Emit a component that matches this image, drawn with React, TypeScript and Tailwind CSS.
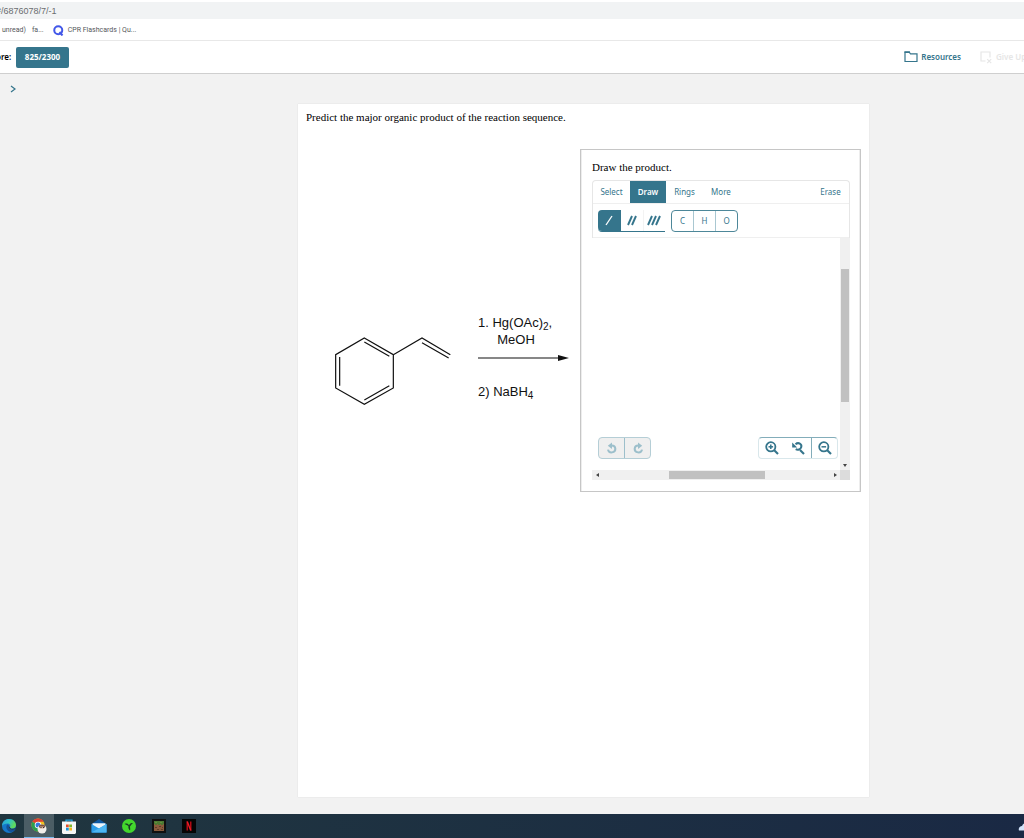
import type { ReactNode } from "react";

const teal = "#35758c";

function IconFolder() {
  return (
    <svg width="14" height="12" viewBox="0 0 14 12" fill="none" stroke={teal} strokeWidth="1.2">
      <path d="M1 10.5V1.2h4.2l1.3 1.6H13v7.700z" />
      <path d="M.5 1.2h5.500" strokeWidth="1.6" />
    </svg>
  );
}

function IconGiveUp() {
  return (
    <svg width="12" height="13" viewBox="0 0 12 13" fill="none" stroke="#e6e6e6" strokeWidth="1.2">
      <path d="M5.5 10H1V1h9v5.5" />
      <path d="M7.2 8.2l4 4M11.2 8.2l-4 4" />
    </svg>
  );
}

function Molecule() {
  return (
    <svg
      className="mt-[206px] ml-[27px] h-[70px] w-[118px] shrink-0"
      viewBox="0 0 354 210"
      fill="none"
      stroke="#111"
      strokeWidth="3.6"
      aria-label="Styrene"
      role="img"
    >
      <path d="M91 6l87 50v100l-87 49-86-49V56z" />
      <path d="M91 18l75 43M17 63v86M91 192l75-43" />
      <path d="M178 56l86-50 85 50M264 20l80 46" />
    </svg>
  );
}

function Bonds({ n, color }: { n: number; color: string }) {
  const starts = n === 1 ? [4] : n === 2 ? [3, 7] : [1, 5, 9];
  const run = n === 1 ? 6 : 4;
  return (
    <svg width="15" height="13" viewBox="0 0 15 13" stroke={color} strokeWidth={n === 1 ? 1.3 : 1.9}>
      {starts.map((x) => (
        <path key={x} d={`M${x} 11L${x + run} 2`} />
      ))}
    </svg>
  );
}

function Rotate({ flip }: { flip?: boolean }) {
  return (
    <svg width="12" height="12" viewBox="0 0 12 12" fill="none" className={flip ? "-scale-x-100" : ""}>
      <path d="M2 7.600A3.700 3.400 0 1 0 5.500 3.600" stroke="#9cbfcb" strokeWidth="2" />
      <path d="M6 .5v6.500L1.800 3.700z" fill="#9cbfcb" />
    </svg>
  );
}

function Zoom({ kind }: { kind: "in" | "reset" | "out" }) {
  return (
    <svg width="14" height="14" viewBox="0 0 14 14" fill="none" stroke={teal} strokeWidth="1.8">
      {kind === "reset" ? (
        <>
          <path d="M4.5 3.2C7.5 .8 11.2 3 10.2 6.2 9.500 8.600 6.800 9.400 4.700 8.200" strokeWidth="2" />
          <path d="M1.2 1.6v5h5z" fill={teal} stroke="none" />
        </>
      ) : (
        <>
          <circle cx="5.8" cy="5.8" r="4.6" />
          <path d="M3.5 5.8h4.6" strokeWidth="1.5" />
          {kind === "in" && <path d="M5.8 3.5v4.6" strokeWidth="1.5" />}
        </>
      )}
      <path d="M9 9l4 4" strokeWidth="2.2" />
    </svg>
  );
}

function ToolButton({ label, className, children }: { label: string; className: string; children: ReactNode }) {
  return (
    <button type="button" aria-label={label} className={`flex items-center justify-center ${className}`}>
      {children}
    </button>
  );
}

function Editor() {
  return (
    <section className="mt-[19px] mr-2 ml-auto w-[281px] shrink-0 self-start border border-[#c6c6c6] pt-[9px] pr-[10px] pb-[11px] pl-[11px] shadow-[inset_1px_0_0_#ededed,inset_-1px_0_0_#ededed]">
      <h2 className="h-[21px] font-['Liberation_Serif',serif] text-[11px] leading-[17px] text-black">
        Draw the product.
      </h2>
      <div className="rounded-t-sm border border-b-0 border-[#e6e6e6]">
        <div className="flex h-[22px] text-[8px] text-[#35758c]" role="tablist">
          <button type="button" role="tab" className="w-[37px]">Select</button>
          <button type="button" role="tab" aria-selected="true" className="w-9 bg-[#35758c] font-semibold text-white">Draw</button>
          <button type="button" role="tab" className="w-[37px]">Rings</button>
          <button type="button" role="tab" className="w-9">More</button>
          <button type="button" className="ml-auto w-[37px]">Erase</button>
        </div>
        <div className="flex h-[35px] items-center gap-[6px] border-y border-[#efefef] px-[5px] text-[8px] text-[#35758c]">
          <div className="flex h-[22px] rounded-l-sm border-b border-[#35758c]">
            <ToolButton label="Single bond" className="w-[23px] rounded-l-sm bg-[#35758c]"><Bonds n={1} color="#fff" /></ToolButton>
            <ToolButton label="Double bond" className="w-[22px]"><Bonds n={2} color={teal} /></ToolButton>
            <ToolButton label="Triple bond" className="w-[22px] border-l border-[#f3f3f3]"><Bonds n={3} color={teal} /></ToolButton>
          </div>
          <div className="flex h-[22px] divide-x divide-[#a9c7d1] rounded-sm border border-[#4d8799]">
            <button type="button" className="w-[22px]">C</button>
            <button type="button" className="w-[22px]">H</button>
            <button type="button" className="w-[21px]">O</button>
          </div>
        </div>
      </div>
      <div className="flex h-[232px]">
        <div className="flex flex-1 items-end justify-between pr-[2px] pb-[11px] pl-[6px]">
          <div className="flex h-[22px] rounded-sm border border-[#b5ced6] bg-[#efefef]">
            <ToolButton label="Undo" className="w-[26px] border-r border-[#9cbfcb]"><Rotate /></ToolButton>
            <ToolButton label="Redo" className="w-[25px]"><Rotate flip /></ToolButton>
          </div>
          <div className="flex h-[22px] rounded-sm border border-x-[#d9e7eb] border-t-[#83adba] border-b-[#d9e7eb]">
            <ToolButton label="Zoom in" className="w-[26px]"><Zoom kind="in" /></ToolButton>
            <ToolButton label="Reset zoom" className="w-[26px]"><Zoom kind="reset" /></ToolButton>
            <ToolButton label="Zoom out" className="w-[26px] border-l border-[#83adba]"><Zoom kind="out" /></ToolButton>
          </div>
        </div>
        <div className="flex w-[10px] flex-col items-center justify-between bg-[#f0f0f0] pt-[31px] pb-[3px]">
          <div className="h-[133px] w-2 bg-[#c1c1c1]" />
          <svg width="4" height="3" viewBox="0 0 4 3"><path d="M0 0h4L2 3z" fill="#444" /></svg>
        </div>
      </div>
      <div className="flex h-[10px] bg-[#f0f0f0]">
        <div className="flex flex-1 items-center justify-between pr-[3px] pl-1">
          <svg width="3" height="4" viewBox="0 0 3 4"><path d="M3 0v4L0 2z" fill="#444" /></svg>
          <div className="h-2 w-24 bg-[#c1c1c1]" />
          <svg width="3" height="4" viewBox="0 0 3 4"><path d="M0 0v4l3-2z" fill="#444" /></svg>
        </div>
        <div className="w-[10px] bg-[#dcdcdc]" />
      </div>
    </section>
  );
}

function Edge() {
  return (
    <svg width="14" height="14" viewBox="0 0 28 28">
      <defs>
        <linearGradient id="edgeTop" x1="0" y1="0" x2="1" y2="0.4">
          <stop offset="0" stopColor="#2a9bd8" />
          <stop offset="0.5" stopColor="#2fc3c9" />
          <stop offset="1" stopColor="#62dc58" />
        </linearGradient>
      </defs>
      <circle cx="14" cy="14" r="14" fill="#1578ca" />
      <path d="M0 14C0 5 7 0 14 0c9 0 14 6 14 12 0 5-4 7-8 7-3 0-5-1-4-3 2-4-1-7-5-7-5 0-10 2-11 5z" fill="url(#edgeTop)" />
      <path d="M10 12c-3 4-1 13 9 14 4-1 7-4 8-6-6 3-14 1-13-5 0-3-2-5-4-3z" fill="#135198" />
      <path d="M14 15c-1 6 7 8 13 5l1 -3c-4 3-12 4-12-1z" fill="#20363f" />
    </svg>
  );
}

function Chrome() {
  return (
    <svg width="16" height="16" viewBox="0 0 32 32">
      <circle cx="14" cy="14" r="13" fill="#f4c320" />
      <path d="M14 14L2.7 7.5A13 13 0 0 1 25.3 7.5H14z" fill="#df4034" />
      <path d="M14 14L2.7 7.5A13 13 0 0 0 14 27l5-9z" fill="#2d9d50" />
      <circle cx="14" cy="14" r="6.5" fill="#fff" />
      <circle cx="14" cy="14" r="5" fill="#3779dd" />
      <circle cx="22" cy="22" r="9" fill="#f0eeeb" />
      <path d="M16 15c3-3 9-3 12 0v4H16z" fill="#7a5245" />
      <path d="M18 17h8v4h-8z" fill="#d7ab91" />
      <path d="M19 18h2v2h-2zM24 18h2v2h-2z" fill="#292d35" />
    </svg>
  );
}

function Store() {
  return (
    <svg width="14" height="15" viewBox="0 0 28 30">
      <path d="M8 6V2h12v4" fill="none" stroke="#25a6df" strokeWidth="2.5" />
      <path d="M0 5h28v23l-2 2H2l-2-2z" fill="#f5f6f6" />
      <path d="M8 11h5.5v5.5H8z" fill="#e84d26" />
      <path d="M14.500 11H20v5.500h-5.500z" fill="#7db82a" />
      <path d="M8 17.500h5.500V23H8z" fill="#1896dc" />
      <path d="M14.500 17.500H20V23h-5.500z" fill="#f5b51b" />
    </svg>
  );
}

function Mail() {
  return (
    <svg width="16" height="14" viewBox="0 0 32 28">
      <path d="M1 10L16 0l15 10v17H1z" fill="#0f5aa3" />
      <path d="M3 9h26v10H3z" fill="#edf5fb" />
      <path d="M1 10l15 9 15-9v17H1z" fill="#2b9ce8" />
      <path d="M31 10v17H1z" fill="#4cb6f4" />
      <path d="M3 9h26L16 18z" fill="#edf5fb" />
    </svg>
  );
}

function Razer() {
  return (
    <svg width="14" height="14" viewBox="0 0 28 28">
      <circle cx="14" cy="14" r="14" fill="#43d62d" />
      <path d="M5 10c4-2 7-1 9 3 1-4 4-5 8-5-2 2-4 4-6 7 0 3 1 5 0 8-2-2-4-5-3-8-2-3-5-4-8-5z" fill="#183c24" />
    </svg>
  );
}

function Grass() {
  return (
    <svg width="14" height="14" viewBox="0 0 14 14" shapeRendering="crispEdges">
      <path d="M0 0h14v14H0z" fill="#101010" />
      <path d="M2 2h10v10H2z" fill="#8b5b3d" />
      <path d="M2 2h10v3h-1v1h-2V5H8v1H6V5H5v1H3V5H2z" fill="#4c7932" />
      <path d="M3 8h2v1H3zM7 7h2v1H7zM9 10h2v1H9zM5 10h2v1H5zM10 8h1v1h-1z" fill="#5f3d29" />
      <path d="M3 3h2v1H3zM8 3h2v1H8z" fill="#63903c" />
    </svg>
  );
}

function Netflix() {
  return (
    <svg width="14" height="14" viewBox="0 0 28 28">
      <path d="M0 0h28v28H0z" fill="#050505" />
      <path d="M9 5h3v18H9zM16 5h3v18h-3z" fill="#b20b14" />
      <path d="M9 5h3l7 18h-3z" fill="#ed1c27" />
    </svg>
  );
}

const apps = [
  { name: "Edge", icon: <Edge /> },
  { name: "Chrome", icon: <Chrome />, active: true },
  { name: "Store", icon: <Store /> },
  { name: "Mail", icon: <Mail /> },
  { name: "Razer", icon: <Razer /> },
  { name: "Minecraft", icon: <Grass /> },
  { name: "Netflix", icon: <Netflix /> },
];

export default function App() {
  return (
    <div className="flex min-h-screen flex-col overflow-hidden bg-[#f2f2f2] font-['Noto_Sans',sans-serif] text-black">
      <div className="bg-white pt-[2px]">
        <div className="-ml-1 h-[17px] bg-[#f1f3f4] font-['Liberation_Sans',sans-serif] text-[9px] leading-[18px] text-[#6a6d70]">
          #/6876078/7/-1
        </div>
      </div>
      <nav className="flex h-[22px] items-center border-b border-[#e8e8e8] bg-white pt-px pl-[2px] font-['Roboto',sans-serif] text-[7px] text-[#55585c]">
        <a href="#mail" className="flex gap-[6px]">
          <span>unread)</span>
          <span>fa...</span>
        </a>
        <a href="#cards" className="ml-[9px] flex items-center gap-1">
          <svg width="11" height="11" viewBox="0 0 22 22" fill="none" stroke="#4257e8" strokeWidth="4">
            <circle cx="10.500" cy="10.500" r="8" />
            <path d="M13 14l6 7" />
          </svg>
          CPR Flashcards | Qu...
        </a>
      </nav>
      <header className="flex h-[33px] items-center border-b border-[#cfcfcf] bg-white text-[8px] font-semibold">
        <span className="-ml-1 w-[20px] shrink-0">ore:</span>
        <span className="flex h-[21px] w-[53px] items-center justify-center rounded-xs bg-[#35758c] font-bold text-white">825/2300</span>
        <div className="-mr-3 ml-auto flex shrink-0 items-center gap-[19px]">
          <a href="#resources" className="flex items-center gap-[3px] text-[#35758c]"><IconFolder />Resources</a>
          <button type="button" disabled className="flex w-[56px] items-center gap-1 whitespace-nowrap text-[#e6e6e6]"><IconGiveUp />Give Up</button>
        </div>
      </header>
      <main className="flex flex-1 pr-[155px] pb-[17px]">
        <aside className="w-[298px] shrink-0 pt-[11px] pl-[10px]">
          <button type="button" aria-label="Expand panel" className="flex">
            <svg width="6" height="8" viewBox="0 0 6 8" fill="none" stroke={teal} strokeWidth="1.2"><path d="M1 1l4 3-4 3" /></svg>
          </button>
        </aside>
        <article className="mt-[30px] flex-1 bg-white shadow-[0_0_1px_#ccc]">
          <h1 className="h-[26px] pt-[5px] pl-2 font-['Liberation_Serif',serif] text-[11px] leading-[17px]">
            Predict the major organic product of the reaction sequence.
          </h1>
          <div className="flex pl-[9px]">
            <Molecule />
            <div className="mt-[184px] ml-[26px] w-[91px] shrink-0 font-['Liberation_Sans',Arial,sans-serif] text-[13px] leading-[17px] text-[#111]">
              <p className="whitespace-nowrap">1. Hg(OAc)<sub className="text-[10px]">2</sub>,</p>
              <p className="pr-[15px] text-center">MeOH</p>
              <svg className="mt-[6px] block w-full" height="8" viewBox="0 0 91 8"><path d="M0 4h82" stroke="#111" strokeWidth="1.2" /><path d="M80 1l11 3-11 3z" fill="#111" /></svg>
              <p className="mt-[21px]">2) NaBH<sub className="text-[10px]">4</sub></p>
            </div>
            <Editor />
          </div>
        </article>
      </main>
      <footer className="flex h-6 shrink-0 justify-between bg-linear-to-r from-[#20363f] to-[#1a2944]">
        <div className="-ml-[6px] flex">
          {apps.map((a) => (
            <button
              key={a.name}
              type="button"
              aria-label={a.name}
              className={
                a.active
                  ? "flex w-[30px] items-center justify-center border-b border-[#76b9ed] bg-[#4b5d65]"
                  : "flex w-[30px] items-center justify-center"
              }
            >
              {a.icon}
            </button>
          ))}
        </div>
        <svg className="mt-2 -mr-3" width="18" height="9" viewBox="0 0 18 9"><path d="M1 8.500C0 6 2 4 4 4c1-3 5-4 8-2 4 0 6 3 5 6.500z" fill="#d3e3fa" /></svg>
      </footer>
    </div>
  );
}
